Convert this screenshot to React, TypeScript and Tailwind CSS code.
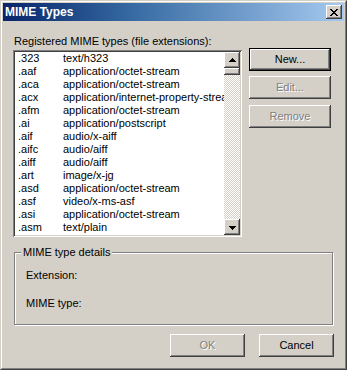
const FONT = "font-['Tahoma','Liberation_Sans',sans-serif]";

const raised =
  "shadow-[inset_-1px_-1px_#404040,inset_1px_1px_#ffffff,inset_-2px_-2px_#808080,inset_2px_2px_#d4d0c8]";
const sunken =
  "shadow-[inset_1px_1px_#808080,inset_-1px_-1px_#ffffff,inset_2px_2px_#404040,inset_-2px_-2px_#d4d0c8]";

const types: [string, string][] = [
  [".323", "text/h323"],
  [".aaf", "application/octet-stream"],
  [".aca", "application/octet-stream"],
  [".acx", "application/internet-property-stream"],
  [".afm", "application/octet-stream"],
  [".ai", "application/postscript"],
  [".aif", "audio/x-aiff"],
  [".aifc", "audio/aiff"],
  [".aiff", "audio/aiff"],
  [".art", "image/x-jg"],
  [".asd", "application/octet-stream"],
  [".asf", "video/x-ms-asf"],
  [".asi", "application/octet-stream"],
  [".asm", "text/plain"],
  [".asx", "video/x-ms-asf"],
];

function Button({
  label,
  disabled,
  isDefault,
  className = "",
}: {
  label: string;
  disabled?: boolean;
  isDefault?: boolean;
  className?: string;
}) {
  const face = (
    <div
      className={`flex h-full w-full items-center justify-center bg-[#d4d0c8] text-[11px] ${raised} ${
        disabled ? "text-[#808080] [text-shadow:1px_1px_0_#ffffff]" : "text-black"
      }`}
    >
      {label}
    </div>
  );
  return (
    <div className={`h-[23px] ${isDefault ? "border border-black" : ""} ${className}`}>{face}</div>
  );
}

function Arrow({ down }: { down?: boolean }) {
  return (
    <div className={`flex h-[16px] w-[16px] items-center justify-center bg-[#d4d0c8] ${raised}`}>
      <svg width="7" height="4" viewBox="0 0 7 4" className={down ? "mt-[1px]" : "-mt-[1px]"}>
        <path d={down ? "M0 0h7L3.5 4z" : "M3.5 0L7 4H0z"} fill="#000" shapeRendering="crispEdges" />
      </svg>
    </div>
  );
}

export default function App() {
  return (
    <div className={`h-[370px] w-[347px] ${FONT} text-[11px] text-black`}>
      <div className="h-full w-full border border-t-[#d4d0c8] border-l-[#d4d0c8] border-r-[#404040] border-b-[#404040]">
        <div className="flex h-full w-full flex-col border border-t-white border-l-white border-r-[#808080] border-b-[#808080] bg-[#d4d0c8] p-[1px]">
          {/* Title bar */}
          <div className="flex h-[18px] items-center bg-gradient-to-r from-[#0a246a] via-[#3a6ea5] via-40% to-[#a6caf0] pl-[2px] pr-[2px]">
            <span className="flex-1 text-[12px] font-bold text-white">MIME Types</span>
            <div className={`flex h-[14px] w-[16px] items-center justify-center bg-[#d4d0c8] ${raised}`}>
              <svg width="8" height="7" viewBox="0 0 8 7" shapeRendering="crispEdges">
                <path
                  d="M0 0h2v1h-2zM6 0h2v1h-2zM1 1h2v1h-2zM5 1h2v1h-2zM2 2h4v1h-4zM3 3h2v1h-2zM2 4h4v1h-4zM1 5h2v1h-2zM5 5h2v1h-2zM0 6h2v1h-2zM6 6h2v1h-2z"
                  fill="#000"
                />
              </svg>
            </div>
          </div>

          <div className="flex flex-col px-[10px]">
            {/* List + buttons */}
            <div className="flex pt-[13px]">
              <div className="w-[229px]">
                <div className="h-[14px] pl-[1px] leading-[14px]">Registered MIME types (file extensions):</div>
                <div className={`mt-[2px] flex h-[187px] bg-white p-[2px] ${sunken}`}>
                  <div className="flex-1 overflow-hidden">
                    {types.map(([ext, mime]) => (
                      <div key={ext} className="flex h-[13px] items-center whitespace-nowrap leading-[13px]">
                        <span className="w-[48px] shrink-0 pl-[3px]">{ext}</span>
                        <span>{mime}</span>
                      </div>
                    ))}
                  </div>
                  <div className="flex w-[16px] flex-col">
                    <Arrow />
                    <div className={`h-[7px] w-[16px] bg-[#d4d0c8] ${raised}`} />
                    <div className="flex-1 bg-[repeating-conic-gradient(#ffffff_0%_25%,#d4d0c8_0%_50%)] bg-[length:2px_2px]" />
                    <Arrow down />
                  </div>
                </div>
              </div>
              <div className="ml-[7px] flex w-[82px] flex-col pt-[14px]">
                <Button label="New..." isDefault />
                <Button label="Edit..." disabled className="mt-[5px]" />
                <Button label="Remove" disabled className="mt-[6px]" />
              </div>
            </div>

            {/* Details group */}
            <div className="relative mx-[1px] mt-[15px] h-[73px] border border-[#808080] shadow-[inset_1px_1px_#ffffff,1px_1px_#ffffff]">
              <span className="absolute -top-[8px] left-[6px] bg-[#d4d0c8] px-[2px] leading-[14px]">
                MIME type details
              </span>
              <div className="flex flex-col gap-[14px] pl-[11px] pt-[15px] leading-[14px]">
                <span>Extension:</span>
                <span>MIME type:</span>
              </div>
            </div>

            {/* Dialog buttons */}
            <div className="mt-[9px] flex justify-end gap-[14px]">
              <Button label="OK" disabled className="w-[75px]" />
              <Button label="Cancel" className="w-[75px]" />
            </div>
          </div>
        </div>
      </div>
    </div>
  );
}
